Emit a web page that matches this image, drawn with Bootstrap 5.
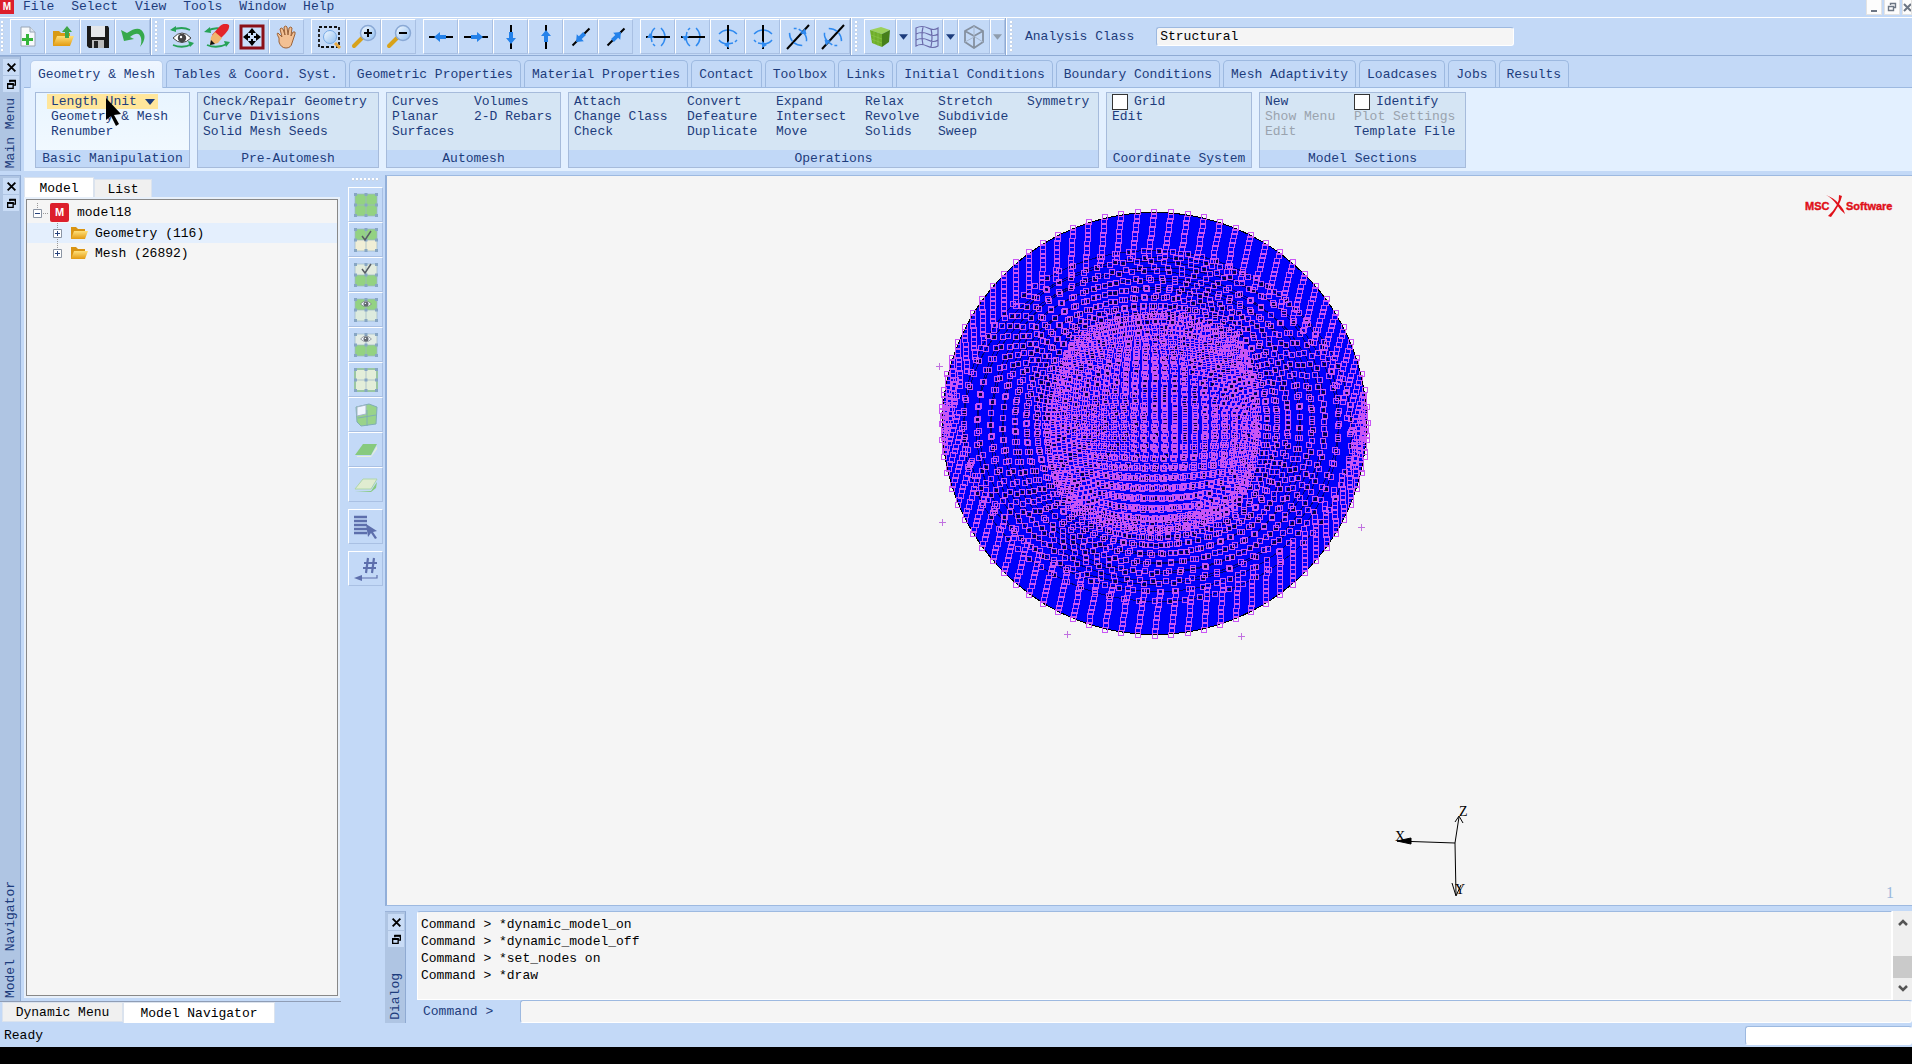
<!DOCTYPE html>
<html lang="en">
<head>
<meta charset="utf-8">
<meta name="viewport" content="width=device-width, initial-scale=1">
<title>model18</title>
<link rel="stylesheet" href="https://cdn.jsdelivr.net/npm/bootstrap@5.3.0/dist/css/bootstrap.min.css">
<style>
:root{--ink:#1d3c7c;--base:#c3d9f7;--edge:#9db9e0;--pane:#f5f5f5}
html,body{height:100%}
body{font-family:"Liberation Mono","DejaVu Sans Mono",monospace;font-size:13px;line-height:15px;color:var(--ink);background:var(--base);overflow:hidden}
button,input{font:inherit;color:inherit}
button{border:0;background:none;padding:0;text-align:left;white-space:nowrap}
a{color:inherit;text-decoration:none}
svg{display:block;flex:none}
/* menu */
.menubar{height:17px;align-items:flex-start}
.menubar a{padding:0 8px 0 9px;line-height:13px}
.mlogo{background:#dc1f2c;color:#fff;font:bold 10px/14px "Liberation Sans",sans-serif;width:14px;height:14px;text-align:center}
.mlogo.big{width:19px;height:19px;line-height:19px;font-size:11px;border-radius:2px}
.winbtn{width:16px;height:15px;background:#fdfdfd;border:1px solid #e3e3e3;border-top:0;display:flex;align-items:center;justify-content:center;margin-left:2px}
.winbtn:last-child{width:10px;overflow:hidden}
/* toolbar */
.toolbar{height:39px;border-top:1px solid #fff;border-bottom:1px solid #8fabd4;padding:1px 0 1px 1px}
.grip{width:3px;height:32px;background:radial-gradient(circle at 1px 1px,#fff 1px,#9fb6d6 2px,transparent 2px) 0 0/3px 4px;margin:0 6px 0 0}
.grip.flat{width:28px;height:3px;background-size:4px 3px;margin:3px auto 6px}
.tool{width:35px;height:35px;border:1px solid;border-color:#fff #a9c0e3 #a9c0e3 #fff;display:flex;align-items:center;justify-content:center;flex:none}
.tool.arrow{width:15px}
.tool.wide{width:32px}
.vsep{width:2px;height:37px;border-left:1px solid #8fabd4;border-right:1px solid #fff;margin:0 3px 0 0}
.gap7{width:7px;height:7px}
.field{border:1px solid var(--edge);border-color:var(--edge) #fff #fff var(--edge);border-radius:3px;background:var(--pane);color:#000;outline:0}
.analysislabel{margin-left:6px}
.analysis{width:358px;height:19px;padding:0 3px;margin-left:22px}
/* docks */
.dockstrip{width:21px;background:#afc5e3;border-right:1px solid #8faad2;border-top:1px solid #9bb3d8;padding:2px 0 3px 3px}
.dockbtn{width:16px;height:16px;background:#c9dcf6;display:flex;align-items:center;justify-content:center;margin-bottom:1px}
.sidetext{writing-mode:vertical-rl;transform:rotate(180deg);width:15px;line-height:15px}
.beside{margin-left:3px}
/* ribbon */
.ribbontabs{height:32px;padding:4px 0 0 6px;gap:3px;border-bottom:1px solid var(--edge)}
.ribbontabs a{padding:4px 7px 0;border:1px solid var(--edge);border-bottom:0;border-radius:5px 5px 0 0;line-height:20px;white-space:nowrap}
.ribbontabs a.active{background:linear-gradient(#eff6ff,#e4f1ff);border-color:#b7cdec;margin-bottom:-1px}
.ribbon{background:#e3f0ff;padding:4px 0 3px 11px;gap:7px;height:83px}
.group{border:1px solid #a6bbdb;background:#d5e5f4;height:76px;flex:none;display:flex;flex-direction:column}
.group.hot{background:linear-gradient(#e9f5ff,#f3faff)}
.items{display:grid;grid-auto-flow:column;grid-template-rows:repeat(3,15px);padding:1px 0 0 1px;flex:1;justify-content:start}
.items button,.items label{padding:0 4px;line-height:15px;justify-self:start;white-space:nowrap}
.items label{display:flex;align-items:center;gap:6px}
.items button:disabled{color:#9aa3ae}
.items input{appearance:none;width:16px;height:16px;border:1px solid #333;background:#fff;margin:0}
.gtitle{height:17px;line-height:17px;background:#c1d8f7;text-align:center}
.items .lit{background:#ffe69b;padding-right:3px}
.g1{width:155px}.g1 .items{padding-left:11px}
.g2{width:182px}
.g3{width:175px}.g3 .items{grid-template-columns:82px 80px}
.g4{width:531px}.g4 .items{grid-template-columns:113px 89px 89px 73px 89px 72px}
.g5{width:146px}.g6{width:207px}.g6 .items{grid-template-columns:89px 112px}
/* navigator */
.navpanel{width:317px}
.paneltab{background:#f0f0f0;color:#000;border:1px solid #dbe3ee;text-align:center}
.paneltab.active{background:#fff}
.ptop{padding-top:2px}
.ptop .paneltab{height:20px;width:58px}.ptop .paneltab.active{width:70px;height:22px}
.pbot .paneltab{height:20px;width:121px}.pbot .paneltab.active{height:22px;width:152px}
.treebox{border:1px solid #888;outline:2px solid #e8f0fa;background:var(--pane);color:#000;margin:0 3px 5px 2px;padding-top:2px}
.treerow{height:20px;display:flex;align-items:center;padding-left:6px;gap:7px}
.treerow.kid{padding-left:26px}
.treerow.sel{background:#e4effd}
.treerow.root{gap:0;height:21px}
.pbot{border-top:1px solid #8f9db5;padding-left:2px;height:22px;width:341px}
.vtools{width:44px;padding:0 2px 0 7px}
.vtools .tool svg{opacity:.75}
/* canvas */
.viewport{background:var(--pane);border:1px solid var(--edge);border-left:2px solid #92afd9;border-right:0;color:#000}
.mesh{position:absolute;left:533px;top:24px}
.triad{position:absolute;left:1001px;top:627px;font:14px "Liberation Serif",serif}
.brand{position:absolute;right:15px;top:15px}
.viewno{position:absolute;right:18px;bottom:4px;color:#9bb8dc;font:16px/16px "Liberation Serif",serif}
/* dialog */
.dialogdock{height:117px;padding-top:5px}
.log{height:89px;background:var(--pane);border:1px solid #fff;border-top-color:var(--edge);border-radius:3px 0 0 0;color:#000;line-height:17px;padding:4px 3px}
.sbar{width:20px;background:#efefef;border-left:1px solid #fff}
.thumb{width:19px;height:22px;background:#cacaca}
.cmd{height:23px}
.cmd label{width:103px;padding-left:6px;line-height:23px}
.statusbar{height:24px;color:#000;padding:0 0 0 4px}
.statusbar .field{width:167px;height:19px;background:#fff}
.bottomedge{height:17px;background:#000}
.pointer{position:absolute;left:105px;top:97px}
</style>
<script src="https://cdn.jsdelivr.net/npm/bootstrap@5.3.0/dist/js/bootstrap.bundle.min.js"></script>
</head>
<body class="d-flex flex-column">
<svg width="0" height="0" class="position-absolute" aria-hidden="true">
<defs>
<linearGradient id="fold" x1="0" y1="0" x2="0" y2="1"><stop offset="0" stop-color="#ffe07a"/><stop offset="1" stop-color="#e39a10"/></linearGradient>
<linearGradient id="glass" x1="0" y1="0" x2="1" y2="1"><stop offset="0" stop-color="#f4faff"/><stop offset="1" stop-color="#8fbdf0"/></linearGradient>
<symbol id="x" viewBox="0 0 10 10"><path d="M1.5 1.5l7 7M8.500 1.500l-7 7" stroke="#000" stroke-width="1.700"/></symbol>
<symbol id="restore" viewBox="0 0 10 10"><path d="M3.500 3V1.500h5v4H6.500M1.500 4.500h5v4h-5z" fill="none" stroke="#000" stroke-width="1.200"/><path d="M3 1.500h6M1 4.500h6" stroke="#000" stroke-width="1.800"/></symbol>
<symbol id="folder" viewBox="0 0 18 14"><path d="M1 13V1h5l2 2h7v3" fill="#d99412"/><path d="M1 13L4 5h14l-3 8z" fill="url(#fold)"/></symbol>
<symbol id="ring" viewBox="0 0 26 26"><g fill="none" stroke="#2f8af0" stroke-width="1.500"><path d="M10 4Q6 7 6 13l1 5M16 4q4 4 4 9t-4 9M10 22l-2-2" stroke-dasharray="9 2"/></g><path d="M2 14l7 0-4-5z" fill="#2f8af0"/></symbol>
<symbol id="node9" viewBox="0 0 24 24"><path d="M1 1h22v22H1zM12 1v22M1 12h22" fill="none" stroke="#8aa9b5" stroke-width=".7"/><path d="M0 0h3v3H0zM10.500 0h3v3h-3zM21 0h3v3h-3zM0 10.500h3v3H0zM10.500 10.500h3v3h-3zM21 10.500h3v3h-3zM0 21h3v3H0zM10.500 21h3v3h-3zM21 21h3v3h-3z" fill="#7395b4"/></symbol>
<symbol id="eye" viewBox="0 0 20 12"><path d="M1 6Q10-4 19 6 10 15 1 6z" fill="#fff" stroke="#444"/><circle cx="10" cy="6" r="4.200" fill="#444"/><circle cx="9" cy="5" r="1.200" fill="#fff"/></symbol>
<symbol id="down" viewBox="0 0 10 6"><path d="M0 0h10L5 6z" fill="currentColor"/></symbol>
<symbol id="arr" viewBox="0 0 26 26"><path d="M1 13h24" stroke="#000" stroke-width="2"/><path d="M6 13l6-5v3h6v4h-6v3z" fill="#2582ea"/></symbol>
</defs>
</svg>

<nav class="menubar d-flex" aria-label="Menu">
 <span class="mlogo">M</span>
 <a href="#">File</a><a href="#">Select</a><a href="#">View</a><a href="#">Tools</a><a href="#">Window</a><a href="#">Help</a>
 <div class="ms-auto d-flex">
  <button class="winbtn" aria-label="Minimize"><svg width="8" height="9"><path d="M1 7h6v2H1z" fill="#6d7684"/></svg></button>
  <button class="winbtn" aria-label="Restore"><svg width="10" height="10" viewBox="0 0 10 10"><path d="M3.500 3V1.500h5v4H7M1.500 4.500h5v4h-5z" fill="none" stroke="#6d7684" stroke-width="1.400"/></svg></button>
  <button class="winbtn" aria-label="Close"><svg width="9" height="9" viewBox="0 0 9 9"><path d="M1 1l7 7M8 1L1 8" stroke="#6d7684" stroke-width="2"/></svg></button>
 </div>
</nav>

<div class="toolbar d-flex align-items-center">
 <div class="grip"></div>
 <button class="tool" aria-label="New"><svg width="20" height="24" viewBox="0 0 20 24"><path d="M3 2h9l5 5v14H3z" fill="#f7f9fb" stroke="#98a5b5"/><path d="M12 2v5h5" fill="#dde5ee" stroke="#98a5b5"/><path d="M8 9h3v4h4v3h-4v4H8v-4H4v-3h4z" fill="#35b53a"/></svg></button>
 <button class="tool" aria-label="Open"><svg width="24" height="24" viewBox="0 0 24 24"><path d="M2 21V6h6l2 2h9v4" fill="#d89a14"/><path d="M2 21l4-10h17l-4 10z" fill="url(#fold)"/><path d="M14 13V7h-3l5-6 5 6h-3v6z" fill="#3fa648"/></svg></button>
 <button class="tool" aria-label="Save"><svg width="24" height="24" viewBox="0 0 24 24"><path d="M1 1h21l1 2v20H3l-2-2z" fill="#1b1b1b"/><path d="M5 1h14v11H5z" fill="#e5e7ea"/><path d="M6 15h12v8H6z" fill="#bbb"/><path d="M8 16h4v7H8z" fill="#222"/></svg></button>
 <button class="tool" aria-label="Undo"><svg width="26" height="24" viewBox="0 0 26 24"><path d="M1 5l3 11 10-2-4-2q9-7 11 1 1 5-1 9 6-7 4-13Q20-1 7 8z" fill="#36a94c"/></svg></button>
 <div class="vsep"></div><div class="grip"></div>
 <button class="tool" aria-label="View"><svg width="26" height="26" viewBox="0 0 26 26"><use href="#eye" x="3" y="8" width="20" height="12"/><g stroke="#27a257" stroke-width="1.800" fill="none"><path d="M21 6Q13 2 3 6M4 21q10 4 19-1"/></g><path d="M1 6l6-4v6zM25 19l-6-2 2 6z" fill="#27a257"/></svg></button>
 <button class="tool" aria-label="Redraw"><svg width="28" height="26" viewBox="0 0 28 26"><path d="M22 6Q13 2 4 7M4 21q10 4 20-1" stroke="#27a257" stroke-width="1.800" fill="none"/><path d="M1 8l6-5 1 6zM27 18l-6-1 2 6z" fill="#27a257"/><path d="M17 2q5-4 9-1 1 4-4 9l-7 7-6-6z" fill="#e3242a"/><path d="M12 8l7 6-4 5-8 2 1-8z" fill="#f2b76d"/><path d="M7 21l1-5 4 4z" fill="#111"/></svg></button>
 <button class="tool" aria-label="Fill view"><svg width="26" height="26" viewBox="0 0 26 26"><path d="M2 2h22v22H2z" fill="#cadffb" stroke="#8b1018" stroke-width="3"/><path d="M13 4l4 5h-3v2h-2V9H9zM13 22l-4-5h3v-2h2v2h3zM4 13l5-4v3h2v2H9v3zM22 13l-5 4v-3h-2v-2h2V9z"/></svg></button>
 <button class="tool" aria-label="Pan"><svg width="22" height="24" viewBox="0 0 22 24"><path d="M3 13Q0 8 2 8l4 4-2-8q1-2 3 0l2 6-1-8q2-2 3 0l1 8 1-7q2-2 3 0l-1 8 2-4q3-1 2 2l-3 9q-1 5-6 5t-7-6z" fill="#f3c093" stroke="#9b6238"/></svg></button>
 <div class="gap7"></div>
 <button class="tool" aria-label="Zoom box"><svg width="26" height="26" viewBox="0 0 26 26"><path d="M3 3h20v20H3z" fill="none" stroke="#111" stroke-width="1.800" stroke-dasharray="3 2"/><path d="M19 19l5 5" stroke="#e9aa42" stroke-width="3"/><circle cx="14" cy="13" r="6.500" fill="url(#glass)" stroke="#75a9e6"/></svg></button>
 <button class="tool" aria-label="Zoom in"><svg width="26" height="26" viewBox="0 0 26 26"><path d="M11 14l-8 8" stroke="#d8a21a" stroke-width="4" stroke-linecap="round"/><circle cx="17" cy="9" r="7.500" fill="url(#glass)" stroke="#8aa9d5" stroke-width="1.500"/><path d="M17 5v8M13 9h8" stroke="#000" stroke-width="2"/></svg></button>
 <button class="tool" aria-label="Zoom out"><svg width="26" height="26" viewBox="0 0 26 26"><path d="M11 14l-8 8" stroke="#d8a21a" stroke-width="4" stroke-linecap="round"/><circle cx="17" cy="9" r="7.500" fill="url(#glass)" stroke="#8aa9d5" stroke-width="1.500"/><path d="M13 9h8" stroke="#000" stroke-width="2"/></svg></button>
 <div class="gap7"></div>
 <button class="tool" aria-label="Left"><svg width="26" height="26"><use href="#arr"/></svg></button>
 <button class="tool" aria-label="Right"><svg width="26" height="26" viewBox="0 0 26 26"><use href="#arr" transform="rotate(180 13 13)"/></svg></button>
 <button class="tool" aria-label="Down"><svg width="26" height="26" viewBox="0 0 26 26"><use href="#arr" transform="rotate(270 13 13)"/></svg></button>
 <button class="tool" aria-label="Up"><svg width="26" height="26" viewBox="0 0 26 26"><use href="#arr" transform="rotate(90 13 13)"/></svg></button>
 <button class="tool" aria-label="Nearer"><svg width="26" height="26" viewBox="0 0 26 26"><use href="#arr" transform="rotate(-45 13 13)"/></svg></button>
 <button class="tool" aria-label="Farther"><svg width="26" height="26" viewBox="0 0 26 26"><use href="#arr" transform="rotate(135 13 13)"/></svg></button>
 <div class="gap7"></div>
 <button class="tool" aria-label="Rotate X+"><svg width="26" height="26" viewBox="0 0 26 26"><path d="M1 13h24" stroke="#000" stroke-width="2"/><use href="#ring"/></svg></button>
 <button class="tool" aria-label="Rotate X-"><svg width="26" height="26" viewBox="0 0 26 26"><path d="M1 13h24" stroke="#000" stroke-width="2"/><use href="#ring" transform="matrix(1 0 0 -1 0 26)"/></svg></button>
 <button class="tool" aria-label="Rotate Y+"><svg width="26" height="26" viewBox="0 0 26 26"><path d="M13 1v24" stroke="#000" stroke-width="2"/><use href="#ring" transform="rotate(-90 13 13)"/></svg></button>
 <button class="tool" aria-label="Rotate Y-"><svg width="26" height="26" viewBox="0 0 26 26"><path d="M13 1v24" stroke="#000" stroke-width="2"/><use href="#ring" transform="matrix(0 -1 -1 0 26 26)"/></svg></button>
 <button class="tool" aria-label="Rotate Z+"><svg width="26" height="26" viewBox="0 0 26 26"><path d="M2 25L24 1" stroke="#000" stroke-width="2"/><use href="#ring" transform="rotate(135 13 13)"/></svg></button>
 <button class="tool" aria-label="Rotate Z-"><svg width="26" height="26" viewBox="0 0 26 26"><path d="M2 25L24 1" stroke="#000" stroke-width="2"/><use href="#ring" transform="rotate(-45 13 13)"/></svg></button>
 <div class="vsep"></div><div class="grip"></div>
 <button class="tool wide" aria-label="Solid display"><svg width="22" height="24" viewBox="0 0 22 24"><path d="M1 5l11-3 9 3-8 4z" fill="#9bd15a"/><path d="M1 5l12 4v13L3 18z" fill="#6fae2a"/><path d="M13 9l8-4-1 12-7 5z" fill="#47801a"/><path d="M5 6v13M9 8v13M2 10l11 4M2 14l11 4" stroke="#8cc84c" stroke-width=".6"/></svg></button>
 <button class="tool arrow" aria-label="Solid options"><svg width="9" height="6"><use href="#down"/></svg></button>
 <button class="tool wide" aria-label="Mesh display"><svg width="26" height="24" viewBox="0 0 26 24"><path d="M2 3q6-3 12 0t10 0v18q-5 3-11 0t-11 0zM2 9q6-3 12 0t10 0M2 15q6-3 12 0t10 0M9 2q-2 8 0 18M17 4q2 8 0 18" fill="none" stroke="#6a6aaa" stroke-width="1.200"/></svg></button>
 <button class="tool arrow" aria-label="Mesh options"><svg width="9" height="6"><use href="#down"/></svg></button>
 <button class="tool wide" aria-label="Wireframe"><svg width="22" height="24" viewBox="0 0 22 24"><path d="M11 1l9 5v11l-9 6-9-6V6zM2 6l9 5 9-5M11 11v12" fill="none" stroke="#85909f" stroke-width="1.800"/><path d="M11 1v11L2 17M12 12l8 5" stroke="#a9b8cc" fill="none"/></svg></button>
 <button class="tool arrow text-secondary" aria-label="Wireframe options"><svg width="9" height="6" opacity=".6"><use href="#down"/></svg></button>
 <div class="vsep"></div><div class="grip"></div>
 <label class="analysislabel text-nowrap" for="analysis">Analysis Class</label>
 <input id="analysis" class="field analysis" value="Structural">
</div>

<div class="d-flex">
 <aside class="dockstrip d-flex flex-column">
  <button class="dockbtn" aria-label="Close menu"><svg width="11" height="11"><use href="#x"/></svg></button>
  <button class="dockbtn" aria-label="Float menu"><svg width="11" height="11"><use href="#restore"/></svg></button>
  <span class="sidetext mt-auto">Main Menu</span>
 </aside>
 <div class="flex-grow-1 beside">
  <nav class="ribbontabs d-flex" aria-label="Ribbon">
   <a href="#" class="active">Geometry &amp; Mesh</a><a href="#">Tables &amp; Coord. Syst.</a><a href="#">Geometric Properties</a><a href="#">Material Properties</a><a href="#">Contact</a><a href="#">Toolbox</a><a href="#">Links</a><a href="#">Initial Conditions</a><a href="#">Boundary Conditions</a><a href="#">Mesh Adaptivity</a><a href="#">Loadcases</a><a href="#">Jobs</a><a href="#">Results</a>
  </nav>
  <div class="ribbon d-flex">
   <section class="group hot g1"><div class="items"><button class="lit d-flex align-items-center gap-2">Length Unit<svg width="10" height="6"><use href="#down"/></svg></button><button>Geometry &amp; Mesh</button><button>Renumber</button></div><div class="gtitle">Basic Manipulation</div></section>
   <section class="group g2"><div class="items"><button>Check/Repair Geometry</button><button>Curve Divisions</button><button>Solid Mesh Seeds</button></div><div class="gtitle">Pre-Automesh</div></section>
   <section class="group g3"><div class="items"><button>Curves</button><button>Planar</button><button>Surfaces</button><button>Volumes</button><button>2-D Rebars</button></div><div class="gtitle">Automesh</div></section>
   <section class="group g4"><div class="items"><button>Attach</button><button>Change Class</button><button>Check</button><button>Convert</button><button>Defeature</button><button>Duplicate</button><button>Expand</button><button>Intersect</button><button>Move</button><button>Relax</button><button>Revolve</button><button>Solids</button><button>Stretch</button><button>Subdivide</button><button>Sweep</button><button>Symmetry</button></div><div class="gtitle">Operations</div></section>
   <section class="group g5"><div class="items"><label><input type="checkbox">Grid</label><button>Edit</button></div><div class="gtitle">Coordinate System</div></section>
   <section class="group g6"><div class="items"><button>New</button><button disabled>Show Menu</button><button disabled>Edit</button><label><input type="checkbox">Identify</label><button disabled>Plot Settings</button><button>Template File</button></div><div class="gtitle">Model Sections</div></section>
  </div>
 </div>
</div>

<main class="d-flex flex-grow-1 pt-1 overflow-hidden">
 <div class="d-flex flex-column">
  <div class="d-flex flex-grow-1">
   <aside class="dockstrip d-flex flex-column">
    <button class="dockbtn" aria-label="Close navigator"><svg width="11" height="11"><use href="#x"/></svg></button>
    <button class="dockbtn" aria-label="Float navigator"><svg width="11" height="11"><use href="#restore"/></svg></button>
    <span class="sidetext mt-auto">Model Navigator</span>
   </aside>
   <div class="navpanel beside d-flex flex-column">
    <div class="ptop d-flex align-items-end"><button class="paneltab active">Model</button><button class="paneltab">List</button></div>
    <div class="treebox flex-grow-1">
     <div class="treerow root"><svg width="17" height="20" viewBox="0 0 17 20"><path d="M4.500 0v5M10 10.500h6" stroke="#999" stroke-dasharray="1 1"/><path d="M.5 6.500h8v8h-8z" fill="#fff" stroke="#8a94a3"/><path d="M2 10.500h5" stroke="#27427c"/></svg><span class="mlogo big me-2">M</span>model18</div>
     <div class="treerow kid sel"><svg width="10" height="20" viewBox="0 0 10 20"><path d="M4.500 0v20" stroke="#999" stroke-dasharray="1 1"/><path d="M.5 6.500h8v8h-8z" fill="#fff" stroke="#8a94a3"/><path d="M2 10.500h5M4.500 8v5" stroke="#27427c"/></svg><svg width="18" height="14"><use href="#folder"/></svg>Geometry (116)</div>
     <div class="treerow kid"><svg width="10" height="20" viewBox="0 0 10 20"><path d="M4.500 0v6" stroke="#999" stroke-dasharray="1 1"/><path d="M.5 6.500h8v8h-8z" fill="#fff" stroke="#8a94a3"/><path d="M2 10.500h5M4.500 8v5" stroke="#27427c"/></svg><svg width="18" height="14"><use href="#folder"/></svg>Mesh (26892)</div>
    </div>
   </div>
  </div>
  <div class="pbot d-flex"><button class="paneltab">Dynamic Menu</button><button class="paneltab active">Model Navigator</button></div>
 </div>

 <div class="vtools">
  <div class="grip flat"></div>
  <button class="tool" aria-label="All"><svg width="24" height="24"><path d="M1 1h22v22H1z" fill="#84d05c"/><use href="#node9"/></svg></button>
  <button class="tool" aria-label="Select top"><svg width="24" height="24"><path d="M1 1h22v11H1z" fill="#84d05c"/><path d="M1 12h22v11H1z" fill="#fff6cc"/><use href="#node9"/><path d="M8 8l3 4 6-9" fill="none" stroke="#333" stroke-width="1.500"/></svg></button>
  <button class="tool" aria-label="Select bottom"><svg width="24" height="24"><path d="M1 1h22v11H1z" fill="#eef3d8"/><path d="M1 12h22v11H1z" fill="#84d05c"/><use href="#node9"/><path d="M8 6l3 4 6-9" fill="none" stroke="#333" stroke-width="1.500"/></svg></button>
  <button class="tool" aria-label="Show top"><svg width="24" height="24"><path d="M1 1h22v11H1z" fill="#84d05c"/><path d="M1 12h22v11H1z" fill="#e6f1d6"/><use href="#node9"/><use href="#eye" x="6" y="2" width="12" height="8"/></svg></button>
  <button class="tool" aria-label="Show bottom"><svg width="24" height="24"><path d="M1 1h22v11H1z" fill="#eef3e0"/><path d="M1 12h22v11H1z" fill="#84d05c"/><use href="#node9"/><use href="#eye" x="6" y="2" width="12" height="8"/></svg></button>
  <button class="tool" aria-label="Outline"><svg width="24" height="24"><path d="M1 1h22v22H1z" fill="#eef5cf" stroke="#8fcf70" stroke-width="2"/><use href="#node9"/></svg></button>
  <button class="tool" aria-label="Solid"><svg width="24" height="24"><path d="M2 4l13-3 8 3-1 17-15 2-4-4z" fill="#8bd266" stroke="#6ba0a0"/><path d="M3 4l9-2v9l-9 2z" fill="#fff" stroke="#9ab"/><path d="M13 7v16M4 15l18-3" stroke="#6ba0a0"/></svg></button>
  <button class="tool" aria-label="Top face"><svg width="24" height="16"><path d="M3 14h14l6-10v3l-6 8H3z" fill="#f3f6d0"/><path d="M1 13L9 2h14l-6 11z" fill="#73c656"/></svg></button>
  <button class="tool" aria-label="Bottom face"><svg width="24" height="16"><path d="M1 14h16l6-9-1 6-5 4z" fill="#73c656"/><path d="M1 12L9 2h14l-6 10z" fill="#eaf3c4" stroke="#a8d690"/></svg></button>
  <div class="gap7"></div>
  <button class="tool" aria-label="List selection"><svg width="24" height="24" viewBox="0 0 24 24"><path d="M0 2h13M0 6h13M0 10h13M0 14h13M0 18h13" stroke="#3c4c94" stroke-width="2.400"/><path d="M12 9l11 7-4 1 4 6-2 1-4-6-3 4z" fill="#3c4c94"/></svg></button>
  <div class="gap7"></div>
  <button class="tool" aria-label="Enter number"><svg width="24" height="24" viewBox="0 0 24 24"><path d="M14 1l-2 15M20 1l-2 15M10 6h13M9 11h13" stroke="#3c4c94" stroke-width="2.200"/><path d="M23 18v3H7" stroke="#3c4c94" stroke-width="1.200" fill="none"/><path d="M0 21l8-3v6z" fill="#3c4c94"/></svg></button>
 </div>

 <div class="d-flex flex-column flex-grow-1">
  <div class="viewport flex-grow-1 position-relative overflow-hidden">
   <svg id="mesh" class="mesh" width="460" height="460" viewBox="0 0 460 460" shape-rendering="crispEdges" aria-label="Mesh"></svg>
   <svg class="brand" width="92" height="30" viewBox="0 0 92 30"><g fill="#e01019" stroke="#e01019" stroke-width=".4" font-family="Liberation Sans" font-weight="bold" font-size="11"><text x="0" y="19">MSC</text><text x="41" y="19">Software</text></g><path d="M21 4q8 3 12 8 6 6 7 11-5-4-8-9-5-7-11-10zM37 5q-2 9-11 21l-3-1q12-11 11-21z" fill="#e01019"/></svg>
   <svg class="triad" width="90" height="104" viewBox="0 0 90 104"><g stroke="#000" fill="none"><path d="M67 40l4-26M67 40L9 38M67 40l1 52M67 19l4-6 4 7M64 80l4 13 5-11"/><path d="M9 38l14-3v6z" fill="#000"/></g><g fill="#000"><text x="71" y="13">Z</text><text x="7" y="38">X</text><text x="67" y="91">Y</text></g></svg>
   <span class="viewno">1</span>
  </div>
  <div class="dialogdock d-flex">
   <aside class="dockstrip d-flex flex-column">
    <button class="dockbtn" aria-label="Close dialog"><svg width="11" height="11"><use href="#x"/></svg></button>
    <button class="dockbtn" aria-label="Float dialog"><svg width="11" height="11"><use href="#restore"/></svg></button>
    <span class="sidetext mt-auto">Dialog</span>
   </aside>
   <div class="flex-grow-1 ps-2 beside">
    <div class="d-flex">
     <div class="log flex-grow-1"><div>Command &gt; *dynamic_model_on</div><div>Command &gt; *dynamic_model_off</div><div>Command &gt; *set_nodes on</div><div>Command &gt; *draw</div></div>
     <div class="sbar d-flex flex-column align-items-center"><svg width="12" height="20"><path d="M2 14l4-4 4 4" fill="none" stroke="#555" stroke-width="2.500"/></svg><div class="thumb mt-auto"></div><svg width="12" height="22"><path d="M2 8l4 4 4-4" fill="none" stroke="#555" stroke-width="2.500"/></svg></div>
    </div>
    <div class="cmd d-flex"><label for="cmd">Command &gt;</label><input id="cmd" class="field flex-grow-1"></div>
   </div>
  </div>
 </div>
</main>
<footer class="statusbar d-flex align-items-center justify-content-between"><span>Ready</span><input class="field" aria-label="Progress" readonly></footer>
<div class="bottomedge"></div>

<svg class="pointer" width="17" height="30" viewBox="0 0 17 30"><path d="M1 1v22l5-4 5 10 3-2-5-9 7-1z" fill="#000"/></svg>

<script>
// Node plot of a thick disc: a 20 x 20 core block, rings out to the rim, and the side wall.
(function () {
  const cx = 234.5, cy = 223.5, R = 213, N = 80, core = 20;
  const nodes = [], lines = [], dots = [];
  const add = (x, y, dot) => {
    x = Math.round(x - 3); y = Math.round(y - 3);
    nodes.push('M' + x + '.5 ' + y + '.5h5v5h-5z');
    if (dot) dots.push('M' + (x + 2) + ' ' + (y + 2) + 'h3v3h-3z');
  };
  const seg = (a, b) => lines.push('M' + a[0].toFixed(1) + ' ' + a[1].toFixed(1) + 'L' + b[0].toFixed(1) + ' ' + b[1].toFixed(1));
  const onSquare = k => {
    const s = Math.floor(k / core), t = (k % core) / core * 2 - 1;
    return [[t, -1], [1, t], [-t, 1], [-1, -t]][s];
  };
  // square core rounded towards a disc
  const bulge = (u, v) => {
    const h = 106;
    return [
      h * u * (0.255 + 0.7 * Math.sqrt(1 - v * v / 2)),
      h * v * (0.255 + 0.7 * Math.sqrt(1 - u * u / 2))
    ];
  };
  const block = (dx, dy, sx, sy, shear) => {
    for (let i = 0; i <= core; i++) for (let j = 0; j <= core; j++) {
      const p = bulge(i / 10 - 1, j / 10 - 1);
      add(cx + dx + p[0] * sx + p[1] * shear, cy + dy + p[1] * sy, (i + j) % 3 === 0);
    }
  };
  const face = (dx, dy, rx, ry, twist, steps) => {
    steps.forEach((w, n) => {
      const ring = [], turn = twist + n * 0.37;
      for (let k = 0; k < N; k++) {
        const q = onSquare(k), b = bulge(q[0], q[1]);
        const a = -Math.PI * 0.75 + (k + turn) / N * 2 * Math.PI;
        ring.push([
          cx + dx + b[0] * (1 - w) + Math.cos(a) * rx * w,
          cy + dy + b[1] * (1 - w) + Math.sin(a) * ry * w
        ]);
        add(ring[k][0], ring[k][1], k % 2 === 0);
      }
      for (let k = 0; k < N; k++) seg(ring[k], ring[(k + 1) % N]);
    });
  };
  face(-3, -6, 194, 172, 0, [0.06, 0.15, 0.26, 0.38, 0.51, 0.64, 0.78, 0.93]);
  face(3, 6, 194, 172, -1.4, [0.1, 0.2, 0.32, 0.45, 0.58, 0.71, 0.86, 1]);
  block(0, -6, 1, 1, -0.03);
  block(0, 6, 1, 0.97, 0);
  block(1, 0, 0.97, 1.05, 0.02);
  block(-1, 3, 1.04, 1.03, -0.02);
  // side wall
  for (let k = 0; k < N; k++) {
    const a = k / N * 2 * Math.PI + Math.PI / 2;
    const x = cx + R * Math.cos(a), y = cy + 212 * Math.sin(a);
    const dir = Math.sin(a - 0.06) < 0 ? 1 : -1;
    for (let m = 0; m < 11; m++) {
      const sh = m * 4.4 * dir;
      add(x - sh * 0.13 - Math.cos(a) * m * 0.9, y + sh);
    }
  }
  const plus = [[19, 166], [22, 322], [441, 327], [147, 434], [321, 436]]
    .map(p => 'M' + (p[0] - 3) + ' ' + p[1] + '.5h7M' + p[0] + '.5 ' + (p[1] - 3) + 'v7').join('');
  document.getElementById('mesh').innerHTML =
    '<ellipse cx="' + cx + '" cy="' + cy + '" rx="' + (R - 1) + '" ry="211" fill="#0000fb" stroke="#000"/>' +
    '<path d="' + lines.join('') + '" stroke="#000070" fill="none"/>' +
    '<path d="' + dots.join('') + '" fill="#000050"/>' +
    '<path d="' + nodes.join('') + '" stroke="#c955f5" fill="none"/>' +
    '<path d="' + plus + '" stroke="#c070e0" fill="none"/>';
})();
</script>
</body>
</html>
